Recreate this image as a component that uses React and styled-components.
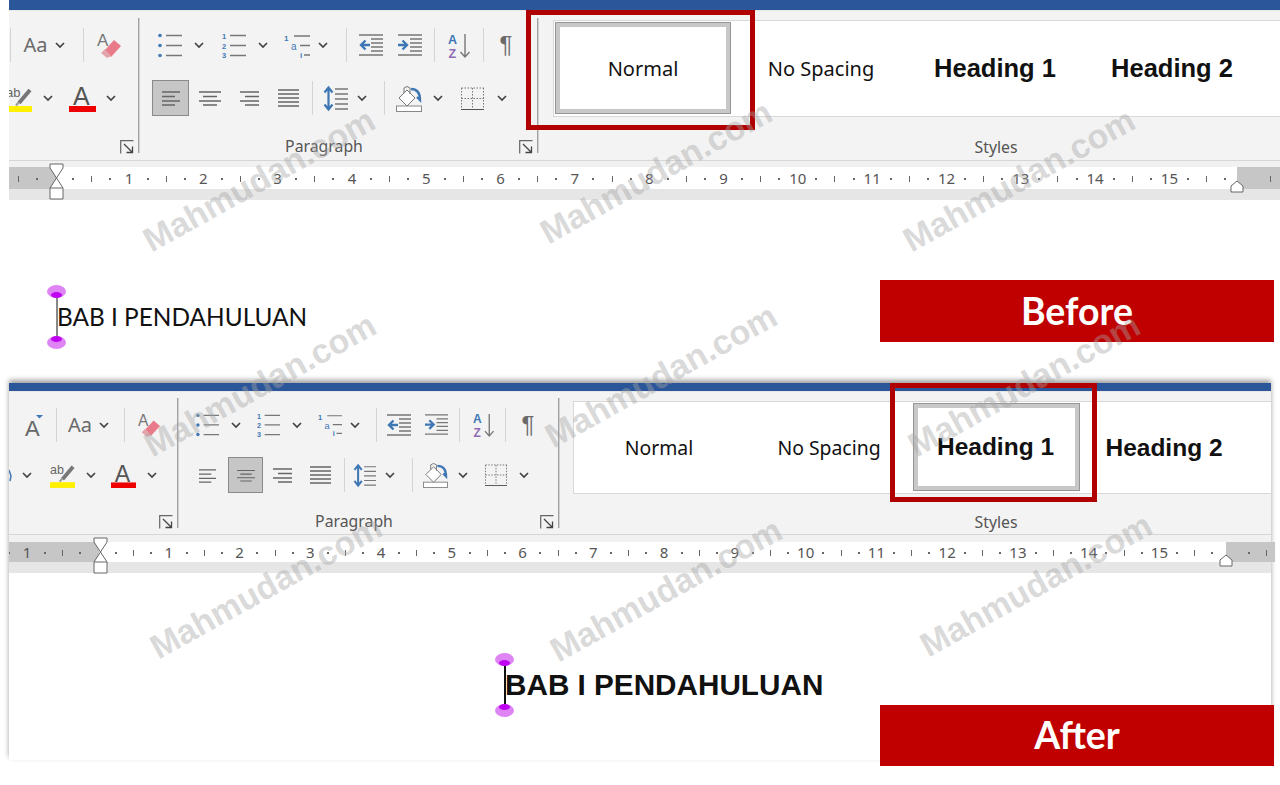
import React from "react"
import styled, { createGlobalStyle } from "styled-components"

const GlobalStyle = createGlobalStyle`
	html, body {
		margin: 0;
		background: #fff;
		font-family: "Noto Sans", sans-serif;
	}
`

const GRAY = "#777"
const BLUE = "#3f77b5"

const Svg = ({ w, vb, children }) => (
	<IconSvg $w={w} viewBox={vb}>
		{children}
	</IconSvg>
)

const Chevron = ({ w }) => (
	<Svg w={w} vb="0 0 10 6">
		<path d="M1 1 L5 5 L9 1" fill="none" stroke="#444" strokeWidth="1.7" />
	</Svg>
)

const Lines = ({ rows, color = GRAY, width = 1.3 }) => (
	<path
		d={rows.map(([a, b, y]) => `M${a} ${y}H${b}`).join("")}
		stroke={color}
		strokeWidth={width}
		fill="none"
	/>
)

const Bullets = ({ w }) => (
	<Svg w={w} vb="0 0 24 25">
		<circle cx="2" cy="2.5" r="1.8" fill={BLUE} />
		<circle cx="2" cy="12.5" r="1.8" fill={BLUE} />
		<circle cx="2" cy="22.5" r="1.8" fill={BLUE} />
		<Lines rows={[[8, 24, 2.5], [8, 24, 12.5], [8, 24, 22.5]]} />
	</Svg>
)

const Numbered = ({ w }) => (
	<Svg w={w} vb="0 0 24 25">
		<IconText x="0" y="6" fontSize="7.5" fontWeight="700" fill={BLUE}>1</IconText>
		<IconText x="0" y="15.5" fontSize="7.5" fontWeight="700" fill={BLUE}>2</IconText>
		<IconText x="0" y="25" fontSize="7.5" fontWeight="700" fill={BLUE}>3</IconText>
		<Lines rows={[[8, 24, 2.5], [8, 24, 12.5], [8, 24, 22.5]]} />
	</Svg>
)

const Multilevel = ({ w }) => (
	<Svg w={w} vb="0 0 26 25">
		<IconText x="0" y="8" fontSize="8" fontWeight="700" fill={BLUE}>1</IconText>
		<IconText x="7" y="17" fontSize="10" fill={BLUE}>a</IconText>
		<IconText x="16" y="25" fontSize="8" fontWeight="700" fill={BLUE}>i</IconText>
		<Lines rows={[[10, 26, 3], [16, 26, 12.5], [20, 26, 22]]} />
	</Svg>
)

const Outdent = ({ w }) => (
	<Svg w={w} vb="0 0 24 22">
		<Lines rows={[[0, 24, 1], [12, 24, 5], [12, 24, 9], [12, 24, 13], [12, 24, 17], [0, 24, 21]]} />
		<path d="M11 11H2M6.5 6.5L2 11L6.5 15.5" fill="none" stroke={BLUE} strokeWidth="2.4" />
	</Svg>
)

const Indent = ({ w }) => (
	<Svg w={w} vb="0 0 24 22">
		<Lines rows={[[0, 24, 1], [12, 24, 5], [12, 24, 9], [12, 24, 13], [12, 24, 17], [0, 24, 21]]} />
		<path d="M0 11H9M4.5 6.5L9 11L4.5 15.5" fill="none" stroke={BLUE} strokeWidth="2.4" />
	</Svg>
)

const Sort = ({ w }) => (
	<Svg w={w} vb="0 0 23 25">
		<IconText x="0" y="10.5" fontSize="12.5" fontWeight="700" fill={BLUE}>A</IconText>
		<IconText x="0.5" y="25" fontSize="12.5" fontWeight="700" fill="#8e6bb5">Z</IconText>
		<path d="M17 1V24M12.5 19L17 24L21.5 19" fill="none" stroke={GRAY} strokeWidth="1.4" />
	</Svg>
)

const Eraser = ({ w }) => (
	<Svg w={w} vb="0 0 24 25">
		<IconText x="0" y="13" fontSize="17" fill={GRAY}>A</IconText>
		<polygon points="8,17 17,7 24,13 14,24" fill="#e87a8a" />
		<polygon points="4,20 8,16 14,23 10,25" fill="#e3a3ab" />
	</Svg>
)

const Grow = ({ w }) => (
	<Svg w={w} vb="0 0 18 22">
		<IconText x="0" y="22" fontSize="22" fill="#666">A</IconText>
		<polygon points="11,1 18,1 14.5,4.5" fill={BLUE} />
	</Svg>
)

const Highlighter = ({ w }) => (
	<Svg w={w} vb="0 0 26 27">
		<IconText x="0" y="12" fontSize="13" fill="#666">ab</IconText>
		<path d="M13 18L24 5" stroke={GRAY} strokeWidth="4" />
		<path d="M10 20.5L13 17" stroke="#999" strokeWidth="2" />
		<rect x="0" y="21" width="26" height="6" fill="#fff000" />
	</Svg>
)

const FontColor = ({ w }) => (
	<Svg w={w} vb="0 0 27 27">
		<IconText x="4" y="20" fontSize="25" fill="#555">A</IconText>
		<rect x="0" y="21" width="27" height="6" fill="#ee0000" />
	</Svg>
)

const ALIGN = {
	left: { w: 18, rows: [[0, 18, 3], [0, 13, 7.5], [0, 18, 12], [0, 13, 16]] },
	center: { w: 22, rows: [[0, 22, 3], [4, 18, 7.5], [0, 22, 12], [4, 18, 16]] },
	right: { w: 19, rows: [[0, 19, 3], [5, 19, 7.5], [0, 19, 12], [5, 19, 16]] },
	justify: { w: 21, rows: [[0, 21, 1], [0, 21, 5], [0, 21, 9], [0, 21, 13], [0, 21, 17]] },
}

const Align = ({ w, mode }) => (
	<Svg w={w} vb={`0 0 ${ALIGN[mode].w} 18`}>
		<Lines rows={ALIGN[mode].rows} color="#666" />
	</Svg>
)

const LineSpacing = ({ w }) => (
	<Svg w={w} vb="0 0 24 25">
		<path d="M4.5 2V23M0.5 6.5L4.5 1.5L8.5 6.5M0.5 18.5L4.5 23.5L8.5 18.5" fill="none" stroke={BLUE} strokeWidth="2.2" />
		<Lines rows={[[11, 24, 3], [11, 24, 8], [11, 24, 13], [11, 24, 18], [11, 24, 23]]} />
	</Svg>
)

const Shading = ({ w }) => (
	<Svg w={w} vb="0 0 26 27">
		<rect x="0.5" y="21" width="25" height="5.5" fill="#fff" stroke="#888" />
		<polygon points="3,13 11,5 19,13 11,21" fill="#fff" stroke={GRAY} />
		<path d="M8 8V3Q11 0 14 3V9" fill="none" stroke={GRAY} />
		<path d="M15 4Q24 4 24 15L21 12" fill="none" stroke={BLUE} strokeWidth="2.4" />
	</Svg>
)

const Borders = ({ w }) => (
	<Svg w={w} vb="0 0 23 23">
		<path d="M0.5 1H23M0.5 11.5H23M0.5 1V22M11.5 1V22M22.5 1V22" fill="none" stroke={GRAY} strokeDasharray="1.5 1.5" />
		<path d="M0 22.5H23" stroke="#555" />
	</Svg>
)

const Bucket = ({ w }) => (
	<Svg w={w} vb="0 0 3 14">
		<path d="M0 2L2 8L1 13" fill="none" stroke={BLUE} strokeWidth="1.5" />
	</Svg>
)

const Launcher = () => (
	<Svg w={14} vb="0 0 14 14">
		<path d="M0.7 13.5V0.7H13.5" fill="none" stroke="#666" strokeWidth="1.2" />
		<path d="M4 4L12.5 12.5M12.5 6.5V12.5H6.5" fill="none" stroke="#444" strokeWidth="1.3" />
	</Svg>
)

const TOOLS = {
	chev: (w) => <Chevron w={w} />,
	bullets: (w) => <Bullets w={w} />,
	numbered: (w) => <Numbered w={w} />,
	multi: (w) => <Multilevel w={w} />,
	outdent: (w) => <Outdent w={w} />,
	indent: (w) => <Indent w={w} />,
	sort: (w) => <Sort w={w} />,
	eraser: (w) => <Eraser w={w} />,
	grow: (w) => <Grow w={w} />,
	high: (w) => <Highlighter w={w} />,
	color: (w) => <FontColor w={w} />,
	left: (w) => <Align w={w} mode="left" />,
	center: (w) => <Align w={w} mode="center" />,
	right: (w) => <Align w={w} mode="right" />,
	justify: (w) => <Align w={w} mode="justify" />,
	spacing: (w) => <LineSpacing w={w} />,
	shading: (w) => <Shading w={w} />,
	borders: (w) => <Borders w={w} />,
	bucket: (w) => <Bucket w={w} />,
	aa: () => <CaseLabel>Aa</CaseLabel>,
	para: () => <Pilcrow>¶</Pilcrow>,
}

// every tool is [kind, width, gap before it]
const before = {
	ribbonH: 149,
	padTop: 7,
	sepH: 135,
	rowTop: 10,
	rowGap: 18,
	footGap: 21,
	fontW: 129,
	paraW: 397,
	stylesW: 914,
	galleryGap: 14,
	galleryTop: 2,
	galleryH: 97,
	fontTop: [
		["sep", 1, 1], ["aa", 23, 13], ["chev", 10, 8], ["sep", 1, 18], ["eraser", 24, 13],
	],
	fontBottom: [
		["high", 26, -3], ["chev", 10, 11], ["color", 27, 16], ["chev", 10, 10],
	],
	paraTop: [
		["bullets", 24, 18], ["chev", 10, 12], ["numbered", 24, 18], ["chev", 10, 12],
		["multi", 26, 16], ["chev", 10, 8], ["sep", 1, 18], ["outdent", 24, 12],
		["indent", 24, 15], ["sep", 1, 12], ["sort", 23, 13], ["sep", 1, 12], ["para", 16, 14],
	],
	paraBottom: [
		["left", 37, 12, true], ["center", 22, 10], ["right", 19, 19], ["justify", 21, 19],
		["sep", 1, 13], ["spacing", 24, 11], ["chev", 10, 9], ["sep", 1, 17],
		["shading", 26, 11], ["chev", 10, 11], ["borders", 23, 18], ["chev", 10, 13],
	],
	styles: [
		{ name: "Normal", w: 176, gap: 0, selected: true },
		{ name: "No Spacing", w: 108, gap: 36 },
		{ name: "Heading 1", w: 124, gap: 58, heading: true },
		{ name: "Heading 2", w: 124, gap: 53, heading: true },
	],
	textSize: 20,
	headSize: 25.5,
	rulerTop: 6,
	rulerH: 22,
	rulerBottom: 11,
	marginW: 48,
	marginSlots: ["tick", "dot"],
	marginPad: 11,
	textPad: 7,
	slot: 18.58,
	textEnd: 1228,
	rightSlots: ["tick"],
	rightPad: 24,
	hourglassLeft: 40,
	markerRight: 1221,
}

const after = {
	...before,
	ribbonH: 142,
	padTop: 6,
	sepH: 130,
	rowTop: 10,
	rowGap: 15,
	footGap: 19,
	fontW: 168,
	paraW: 379,
	stylesW: 872,
	galleryGap: 13,
	galleryTop: 3,
	galleryH: 93,
	fontTop: [
		["grow", 18, 16], ["sep", 1, 13], ["aa", 22, 12], ["chev", 10, 8], ["sep", 1, 15], ["eraser", 22, 13],
	],
	fontBottom: [
		["bucket", 3, 0], ["chev", 10, 10], ["high", 25, 18], ["chev", 10, 11], ["color", 25, 15], ["chev", 10, 11],
	],
	paraTop: [
		["bullets", 23, 17], ["chev", 10, 12], ["numbered", 23, 16], ["chev", 10, 12],
		["multi", 24, 16], ["chev", 10, 8], ["sep", 1, 16], ["outdent", 24, 10],
		["indent", 23, 14], ["sep", 1, 11], ["sort", 22, 13], ["sep", 1, 10], ["para", 14, 15],
	],
	paraBottom: [
		["left", 17, 20], ["center", 35, 12, true], ["right", 19, 10], ["justify", 21, 18],
		["sep", 1, 13], ["spacing", 22, 9], ["chev", 10, 9], ["sep", 1, 17],
		["shading", 25, 10], ["chev", 10, 10], ["borders", 22, 17], ["chev", 10, 12],
	],
	styles: [
		{ name: "Normal", w: 70, gap: 49 },
		{ name: "No Spacing", w: 104, gap: 83 },
		{ name: "Heading 1", w: 167, gap: 32, selected: true, heading: true, nudge: 2 },
		{ name: "Heading 2", w: 120, gap: 24, heading: true },
	],
	textSize: 19.4,
	headSize: 24.5,
	rulerTop: 7,
	rulerH: 20,
	rulerBottom: 11,
	marginW: 90,
	marginSlots: ["dot", "1", "dot", "tick", "dot"],
	marginPad: 10,
	textPad: 8,
	slot: 17.69,
	textEnd: 1217,
	rightSlots: ["dot", "tick"],
	rightPad: 14,
	hourglassLeft: 84,
	markerRight: 1210,
}

const Mark = ({ kind }) => {
	if (kind === "dot") return <RulerDot />
	if (kind === "tick") return <RulerTick />
	return <RulerNum>{kind}</RulerNum>
}

const Slots = ({ list, slot }) =>
	list.map((kind, i) => (
		<Slot key={i} $w={slot}>
			<Mark kind={kind} />
		</Slot>
	))

const rulerMarks = () => {
	const list = []
	for (let k = 1; k <= 63; k++) {
		if (k % 4 === 0) list.push(String(k / 4))
		else list.push(k % 2 === 0 ? "tick" : "dot")
	}
	return list
}

const ToolRow = ({ tools, height }) => (
	<Row $h={height}>
		{tools.map(([kind, w, gap, active], i) =>
			kind === "sep" ? (
				<MinorSep key={i} $gap={gap} />
			) : active ? (
				<ActiveTool key={i} $w={w} $gap={gap}>
					{TOOLS[kind](18)}
				</ActiveTool>
			) : (
				<Tool key={i} $w={w} $gap={gap}>
					{TOOLS[kind](w)}
				</Tool>
			)
		)}
	</Row>
)

const Ribbon = ({ cfg }) => (
	<RibbonBar $h={cfg.ribbonH} $pad={cfg.padTop}>
		<Group $w={cfg.fontW} $top={cfg.rowTop}>
			<ToolRow tools={cfg.fontTop} height={34} />
			<RowGap $h={cfg.rowGap} />
			<ToolRow tools={cfg.fontBottom} height={36} />
			<Footer $gap={cfg.footGap}>
				<FooterLabel />
				<Launcher />
			</Footer>
		</Group>
		<MajorSep $h={cfg.sepH} />
		<Group $w={cfg.paraW} $top={cfg.rowTop}>
			<ToolRow tools={cfg.paraTop} height={34} />
			<RowGap $h={cfg.rowGap} />
			<ToolRow tools={cfg.paraBottom} height={36} />
			<Footer $gap={cfg.footGap}>
				<FooterLabel>Paragraph</FooterLabel>
				<Launcher />
			</Footer>
		</Group>
		<MajorSep $h={cfg.sepH} />
		<StylesGroup $w={cfg.stylesW}>
			<Gallery $left={cfg.galleryGap} $top={cfg.galleryTop} $h={cfg.galleryH}>
				{cfg.styles.map((s) => (
					<StyleCell
						key={s.name}
						$w={s.w}
						$gap={s.gap}
						$selected={s.selected}
						$heading={s.heading}
						$nudge={s.nudge || 0}
						$size={s.heading ? cfg.headSize : cfg.textSize}
					>
						{s.name}
					</StyleCell>
				))}
			</Gallery>
			<StylesLabel $top={cfg.rowTop + 34 + cfg.rowGap + 36 + cfg.footGap - cfg.galleryTop - cfg.galleryH}>
				Styles
			</StylesLabel>
		</StylesGroup>
	</RibbonBar>
)

const Ruler = ({ cfg }) => (
	<RulerWrap $top={cfg.rulerTop} $bottom={cfg.rulerBottom}>
		<RulerBar $h={cfg.rulerH}>
			<MarginZone $w={cfg.marginW} $pad={cfg.marginPad}>
				<Slots list={cfg.marginSlots} slot={cfg.slot} />
			</MarginZone>
			<TextZone $w={cfg.textEnd - cfg.marginW} $pad={cfg.textPad}>
				<Slots list={rulerMarks()} slot={cfg.slot} />
			</TextZone>
			<RightZone $pad={cfg.rightPad}>
				<Slots list={cfg.rightSlots} slot={cfg.slot} />
			</RightZone>
		</RulerBar>
		<Hourglass $left={cfg.hourglassLeft} viewBox="0 0 15 37">
			<path d="M1 1H14V5L7.5 15L1 5ZM7.5 15L14 25V36H1V25ZM1 25H14" fill="#fff" stroke="#666" />
		</Hourglass>
		<RightMarker $left={cfg.markerRight} viewBox="0 0 14 13">
			<path d="M1 12V6L7 1L13 6V12Z" fill="#fff" stroke="#666" />
		</RightMarker>
	</RulerWrap>
)

const WATERMARKS = [
	[259, 180], [656, 172], [1019, 180],
	[260, 385], [661, 376], [1024, 385],
	[266, 587], [666, 590], [1036, 585],
]

const App = () => (
	<>
		<GlobalStyle />
		<Page>
			<PanelBefore>
				<TopBar />
				<Ribbon cfg={before} />
				<Ruler cfg={before} />
				<DocBefore>
					<TitleWrap>
						<Caret />
						<Handle $side="top" />
						<Handle $side="bottom" />
						<PlainTitle>BAB I PENDAHULUAN</PlainTitle>
					</TitleWrap>
					<Banner>Before</Banner>
				</DocBefore>
				<RedBox $left={517} $top={10} $w={229} $h={120} />
			</PanelBefore>

			<PanelAfter>
				<TopBar $h={8} />
				<Ribbon cfg={after} />
				<Ruler cfg={after} />
				<DocAfter>
					<HeadingRow>
						<TitleWrap>
							<Caret $dark />
							<Handle $side="top" />
							<Handle $side="bottom" />
							<BoldTitle>BAB I PENDAHULUAN</BoldTitle>
						</TitleWrap>
					</HeadingRow>
					<Banner $over>After</Banner>
				</DocAfter>
				<RedBox $left={881} $top={0} $w={207} $h={119} />
			</PanelAfter>

			{WATERMARKS.map(([x, y]) => (
				<Watermark key={`${x}-${y}`} $x={x} $y={y}>
					Mahmudan.com
				</Watermark>
			))}
		</Page>
	</>
)

const Page = styled.div`
	position: relative;
	width: 1280px;
	height: 785px;
	overflow: hidden;
	background: #fff;
`

const PanelBefore = styled.section`
	position: relative;
	width: 1271px;
	margin-left: 9px;
`

const PanelAfter = styled.section`
	position: relative;
	width: 1262px;
	height: 377px;
	margin: 41px 0 0 9px;
	background: #fff;
	box-shadow: 0 -3px 5px rgba(0, 0, 0, 0.38);
`

const TopBar = styled.div`
	height: ${(p) => p.$h || 10}px;
	background: #2b579a;
`

const RibbonBar = styled.div`
	display: flex;
	align-items: flex-start;
	box-sizing: content-box;
	height: ${(p) => p.$h - p.$pad}px;
	padding-top: ${(p) => p.$pad}px;
	background: #f3f3f3;
	border-top: 1px solid #e8e8e8;
	border-bottom: 1px solid #d6d6d6;
	overflow: hidden;
`

const Group = styled.div`
	flex: none;
	width: ${(p) => p.$w}px;
	padding-top: ${(p) => p.$top}px;
	overflow: hidden;
`

const StylesGroup = styled.div`
	flex: none;
	width: ${(p) => p.$w}px;
`

const Row = styled.div`
	display: flex;
	align-items: center;
	height: ${(p) => p.$h}px;
`

const RowGap = styled.div`
	height: ${(p) => p.$h}px;
`

const Tool = styled.div`
	flex: none;
	display: flex;
	align-items: center;
	justify-content: center;
	width: ${(p) => p.$w}px;
	margin-left: ${(p) => p.$gap}px;
`

const ActiveTool = styled(Tool)`
	box-sizing: border-box;
	height: 36px;
	background: #c6c6c6;
	border: 1px solid #8a8a8a;
`

const IconSvg = styled.svg`
	display: block;
	flex: none;
	width: ${(p) => p.$w}px;
	overflow: visible;
`

const IconText = styled.text`
	font-family: "Liberation Sans", sans-serif;
`

const CaseLabel = styled.span`
	font-family: "Noto Sans", sans-serif;
	font-size: 20px;
	line-height: 1;
	color: #6a6a6a;
`

const Pilcrow = styled.span`
	font-family: "Liberation Sans", sans-serif;
	font-size: 24px;
	line-height: 1;
	color: #6a6a6a;
`

const MinorSep = styled.div`
	flex: none;
	width: 1px;
	height: 34px;
	margin-left: ${(p) => p.$gap}px;
	background: #d4d4d4;
`

const MajorSep = styled.div`
	flex: none;
	width: 2px;
	height: ${(p) => p.$h}px;
	background: linear-gradient(90deg, #a2a2a2 50%, #d0d0d0 50%);
`

const Footer = styled.div`
	display: flex;
	align-items: center;
	height: 20px;
	margin-top: ${(p) => p.$gap}px;
	padding-right: 4px;
`

const FooterLabel = styled.div`
	flex: 1;
	padding: 0 11px 2px 0;
	text-align: center;
	font-size: 15.8px;
	line-height: 20px;
	color: #555;
`

const Gallery = styled.div`
	display: flex;
	align-items: center;
	height: ${(p) => p.$h}px;
	margin: ${(p) => p.$top}px 0 0 ${(p) => p.$left}px;
	padding-left: 1px;
	background: #fff;
	border: 1px solid #d8d8d8;
	box-sizing: border-box;
`

const StyleCell = styled.div`
	flex: none;
	box-sizing: border-box;
	display: flex;
	align-items: center;
	justify-content: center;
	width: ${(p) => p.$w}px;
	height: ${(p) => (p.$selected ? "calc(100% - 3px)" : "auto")};
	margin-left: ${(p) => p.$gap}px;
	margin-bottom: ${(p) => (p.$selected ? 1 : 0)}px;
	padding-right: ${(p) => p.$nudge}px;
	white-space: nowrap;
	color: #111;
	font-family: ${(p) => (p.$heading ? '"Liberation Sans", sans-serif' : '"Noto Sans", sans-serif')};
	font-size: ${(p) => p.$size}px;
	font-weight: ${(p) => (p.$heading ? 700 : 400)};
	border: ${(p) => (p.$selected ? "1px solid #969696" : "none")};
	box-shadow: ${(p) => (p.$selected ? "inset 0 0 0 4px #c8c8c8" : "none")};
`

const StylesLabel = styled.div`
	margin-top: ${(p) => p.$top}px;
	text-align: center;
	font-size: 15.8px;
	line-height: 20px;
	color: #555;
`

const RulerWrap = styled.div`
	position: relative;
	padding: ${(p) => p.$top}px 0 ${(p) => p.$bottom}px;
	background: linear-gradient(180deg, #f1f1f1 30%, #e6e6e6 30%);
`

const RulerBar = styled.div`
	display: flex;
	height: ${(p) => p.$h}px;
	background: #fff;
`

const MarginZone = styled.div`
	flex: none;
	display: flex;
	justify-content: flex-end;
	box-sizing: border-box;
	width: ${(p) => p.$w}px;
	padding-right: ${(p) => p.$pad}px;
	background: #c6c6c6;
	overflow: hidden;
`

const TextZone = styled.div`
	flex: none;
	display: flex;
	box-sizing: border-box;
	width: ${(p) => p.$w}px;
	padding-left: ${(p) => p.$pad}px;
	overflow: hidden;
`

const RightZone = styled.div`
	flex: 1;
	display: flex;
	padding-left: ${(p) => p.$pad}px;
	background: #c6c6c6;
`

const Slot = styled.div`
	flex: none;
	display: flex;
	align-items: center;
	justify-content: center;
	box-sizing: border-box;
	width: ${(p) => p.$w}px;
	padding-top: 1px;
`

const RulerDot = styled.span`
	width: 2px;
	height: 2px;
	background: #666;
`

const RulerTick = styled.span`
	width: 1px;
	height: 6px;
	background: #666;
`

const RulerNum = styled.span`
	font-size: 15px;
	line-height: 1;
	color: #555;
`

const Hourglass = styled.svg`
	position: absolute;
	left: ${(p) => p.$left}px;
	top: 2px;
	width: 15px;
	height: 37px;
`

const RightMarker = styled.svg`
	position: absolute;
	left: ${(p) => p.$left}px;
	top: 19px;
	width: 14px;
	height: 13px;
`

const DocBefore = styled.div`
	display: flex;
	justify-content: space-between;
	align-items: flex-end;
	height: 142px;
	padding: 0 6px 0 48px;
`

const DocAfter = styled.div`
	display: flex;
	flex-direction: column;
	align-items: flex-end;
	height: 187px;
`

const HeadingRow = styled.div`
	align-self: flex-start;
	padding: 95px 0 0 496px;
`

const TitleWrap = styled.div`
	position: relative;
	margin-bottom: 8px;
	${HeadingRow} & {
		margin-bottom: 0;
	}
`

const PlainTitle = styled.div`
	font-family: Lato, sans-serif;
	font-size: 24.4px;
	line-height: 34px;
	color: #111;
	white-space: nowrap;
`

const BoldTitle = styled.div`
	font-family: "Liberation Sans", sans-serif;
	font-size: 29.7px;
	font-weight: 700;
	line-height: 34px;
	color: #111;
	white-space: nowrap;
`

const Caret = styled.div`
	position: absolute;
	left: -1px;
	top: -8px;
	bottom: -8px;
	width: ${(p) => (p.$dark ? 1.5 : 2)}px;
	background: ${(p) => (p.$dark ? "#111" : "#888")};
`

const Handle = styled.div`
	position: absolute;
	left: -10px;
	${(p) => (p.$side === "top" ? "top: -15px;" : "bottom: -15px;")}
	width: 19px;
	height: 13px;
	border-radius: 50%;
	background: #df84f5;
	&::after {
		content: "";
		position: absolute;
		left: 4px;
		${(p) => (p.$side === "top" ? "bottom: 0;" : "top: 0;")}
		width: 11px;
		height: 6px;
		border-radius: 50%;
		background: #c000f0;
	}
`

const Banner = styled.div`
	flex: none;
	box-sizing: border-box;
	width: 394px;
	height: ${(p) => (p.$over ? 61 : 62)}px;
	margin: auto ${(p) => (p.$over ? -3 : 0)}px ${(p) => (p.$over ? -6 : 0)}px 0;
	padding-bottom: 2px;
	display: flex;
	align-items: center;
	justify-content: center;
	background: #c00000;
	color: #fff;
	font-family: Lato, sans-serif;
	font-size: 37.5px;
	font-weight: 700;
`

const RedBox = styled.div`
	position: absolute;
	box-sizing: border-box;
	left: ${(p) => p.$left}px;
	top: ${(p) => p.$top}px;
	width: ${(p) => p.$w}px;
	height: ${(p) => p.$h}px;
	border: 5px solid #b00000;
`

const Watermark = styled.div`
	position: absolute;
	left: ${(p) => p.$x}px;
	top: ${(p) => p.$y}px;
	transform: translate(-50%, -50%) rotate(-29deg);
	font-family: "Liberation Sans", sans-serif;
	font-size: 34px;
	font-weight: 700;
	white-space: nowrap;
	color: rgba(165, 165, 165, 0.42);
	pointer-events: none;
`

export default App
